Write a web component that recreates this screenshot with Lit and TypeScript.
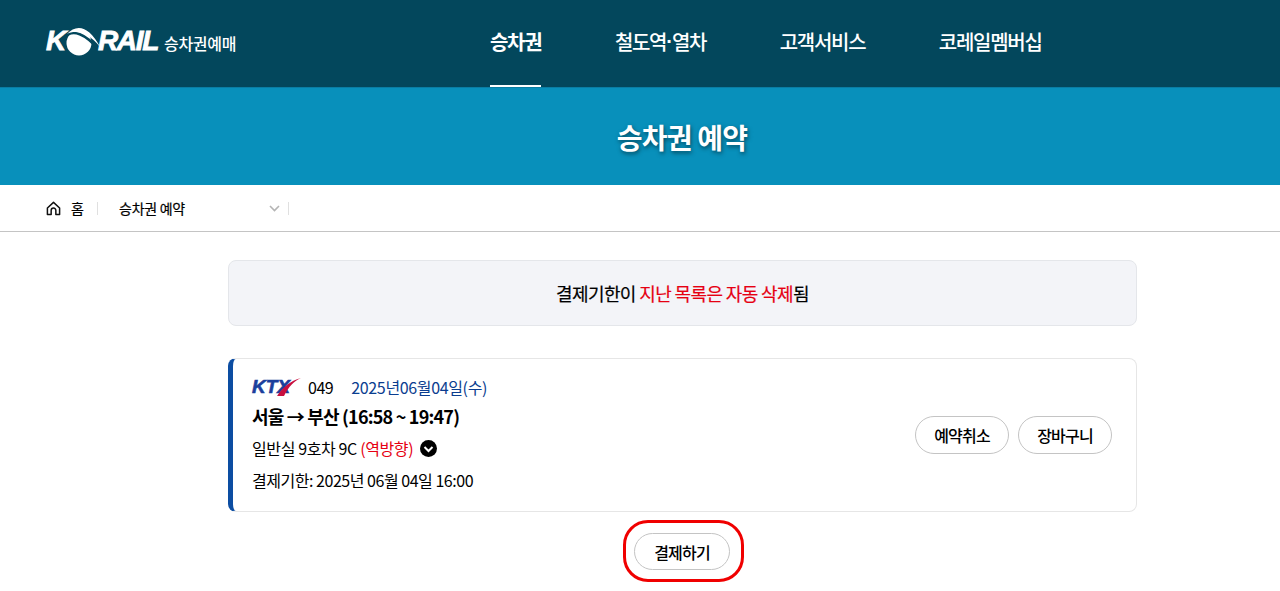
import { LitElement, html, css } from "lit";
import { customElement } from "lit/decorators.js";

@customElement("app-root")
export class AppRoot extends LitElement {
  static styles = css`
    :host { display: block; height: 591px; overflow: hidden; background: #fff; color: #000;
      font-family: "Noto Sans CJK KR", "Noto Sans", sans-serif; letter-spacing: -0.05em; }
    * { box-sizing: border-box; }
    .top { height: 87px; background: #03475c; display: grid; grid-template-columns: 490px auto; }
    .logo { display: flex; align-items: center; padding: 0 0 6px 46px; color: #fff; }
    .kor { display: flex; align-items: center; font: italic 900 28px/28px "Liberation Sans", sans-serif; letter-spacing: -1.3px; -webkit-text-stroke: 0.8px #fff; }
    .globe { width: 36px; height: 30px; margin: 0 -2px 0 -1px; }
    .sub { font-size: 16px; font-weight: 500; margin: 4px 0 0 6px; letter-spacing: -0.02em; }
    nav { display: flex; gap: 73.5px; letter-spacing: -1.28px; }
    nav a { height: 87px; display: flex; align-items: center; padding-bottom: 2px; color: #fff; font-size: 20px; font-weight: 500; border-bottom: 2px solid transparent; white-space: pre; }
    nav a.on { font-weight: 700; border-bottom-color: #fff; }
    .dot { font-family: "Liberation Sans", sans-serif; font-weight: 700; letter-spacing: -1px; }
    .hero { height: 98px; background: #0890bb; display: flex; align-items: center; justify-content: center; padding-left: 84px; color: #fff; font-size: 28px; font-weight: 700; text-shadow: 1px 2px 4px rgba(0,0,0,.5); border-top: 1px solid #0a7da3; }
    .crumb { height: 47px; border-bottom: 1px solid #c4c4c4; padding: 0 0 0 46px; display: flex; align-items: center; font-size: 14px; font-weight: 400; -webkit-text-stroke: 0.2px #000; }
    .home { width: 15px; height: 15px; margin-right: 10px; }
    .sep { width: 1px; height: 13px; background: #e0e0e0; }
    .here { width: 190px; padding-left: 21px; display: flex; align-items: center; justify-content: space-between; padding-right: 8px; letter-spacing: -0.02em; }
    .m1 { margin-left: 14px; }
    main { width: 909px; margin: 28px 0 0 228px; display: flex; flex-direction: column; align-items: stretch; }
    .notice { height: 66px; background: #f3f4f8; border: 1px solid #e4e6ea; border-radius: 8px; display: flex; align-items: center; justify-content: center; font-size: 18px; font-weight: 400; letter-spacing: -0.62px; padding-bottom: 1px; -webkit-text-stroke: 0.2px currentColor; }
    .red { color: #e60012; }
    .card { margin-top: 32px; height: 154px; border: 1px solid #e6e6e6; border-left: 5px solid #0c4da2; border-radius: 8px; display: flex; align-items: center; justify-content: space-between; padding: 0 24px 0 19px; }
    .info { display: flex; flex-direction: column; font-size: 16px; letter-spacing: -0.46px; padding-bottom: 3px; }
    .l1 { display: flex; align-items: center; height: 24px; }
    .ktx { width: 49px; height: 18px; margin-right: 7px; position: relative; }
    .ktx span { position: absolute; left: 0; bottom: 0; font: italic 900 19px/18px "Liberation Sans", sans-serif; color: #1b3f9c; letter-spacing: 0; -webkit-text-stroke: 0.6px #1b3f9c; }
    .ktx svg { position: absolute; inset: 0; width: 100%; height: 100%; }
    .date { color: #0a3d8f; margin-left: 18px; letter-spacing: -0.35px; }
    .l2 { font-size: 18px; font-weight: 700; height: 26px; line-height: 26px; margin-top: 4px; letter-spacing: -0.8px; }
    .l3 { display: flex; align-items: center; height: 24px; margin-top: 7px; letter-spacing: -0.38px; }
    .l3 .chev { width: 17px; height: 17px; margin-left: 7px; }
    .l4 { height: 24px; line-height: 24px; margin-top: 8px; letter-spacing: -0.47px; }
    .btns { display: flex; gap: 9px; }
    .btn { height: 38px; width: 94px; border: 1px solid #c4c4c4; border-radius: 19px; background: #fff; display: flex; align-items: center; justify-content: center; font: 500 16px "Noto Sans CJK KR", sans-serif; letter-spacing: -0.05em; color: #000; padding: 0; }
    .payrow { display: flex; justify-content: flex-start; margin-top: 8px; padding-left: 395px; }
    .ring { border: 3px solid #f00000; border-radius: 25px; padding: 10px 11px 9px 8px; }
    .ring .btn { height: 37px; width: 96px; }
  `;

  render() {
    return html`
      <header class="top">
        <div class="logo">
          <span class="kor">K<svg class="globe" viewBox="0 0 36 30"><circle cx="15" cy="17" r="12.500" fill="#fff"/><path d="M0 11C9 3 21 7 36 25" fill="none" stroke="#03475c" stroke-width="2.500"/><path d="M3 8C13 -3 26 1 36 21C26 8 13 3 3 8z" fill="#fff"/></svg>RAIL</span>
          <span class="sub">승차권예매</span>
        </div>
        <nav>
          <a class="on">승차권</a><a>철도역<span class="dot">·</span>열차</a><a>고객서비스</a><a>코레일멤버십</a>
        </nav>
      </header>
      <div class="hero">승차권 예약</div>
      <div class="crumb">
        <svg class="home" viewBox="0 0 16 16" fill="none" stroke="#111" stroke-width="1.600" stroke-linejoin="round"><path d="M1.5 7.5 8 1.5l6.500 6v7H10.500V10a2.500 2.500 0 0 0-5 0v4.500H1.500z"/></svg>
        <span>홈</span>
        <span class="sep m1"></span>
        <div class="here">
          <span>승차권 예약</span>
          <svg width="11" height="7" viewBox="0 0 11 7" fill="none" stroke="#b4b4b4" stroke-width="1.600"><path d="M1 1l4.500 4.500L10 1"/></svg>
        </div>
        <span class="sep"></span>
      </div>
      <main>
        <div class="notice"><span>결제기한이 <span class="red">지난 목록은 자동 삭제</span>됨</span></div>
        <section class="card">
          <div class="info">
            <div class="l1">
              <span class="ktx"><span>KTX</span><svg viewBox="0 0 49 18"><path d="M25 18C31 9 38 3 49 0 42 3 37 8 32 18z" fill="#c8103f"/></svg></span>
              <span>049</span><span class="date">2025년06월04일(수)</span>
            </div>
            <div class="l2">서울 → 부산 (16:58 ~ 19:47)</div>
            <div class="l3">
              <span>일반실 9호차 9C&nbsp;<span class="red">(역방향)</span></span>
              <svg class="chev" viewBox="0 0 17 17"><circle cx="8.500" cy="8.500" r="8.500" fill="#000"/><path d="M4.500 7l4 4 4-4" fill="none" stroke="#fff" stroke-width="2"/></svg>
            </div>
            <div class="l4">결제기한: 2025년 06월 04일 16:00</div>
          </div>
          <div class="btns"><button class="btn">예약취소</button><button class="btn">장바구니</button></div>
        </section>
        <div class="payrow"><div class="ring"><button class="btn">결제하기</button></div></div>
      </main>
    `;
  }
}
